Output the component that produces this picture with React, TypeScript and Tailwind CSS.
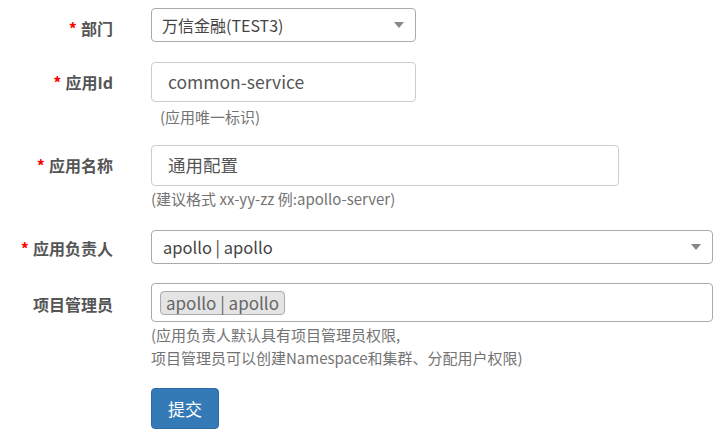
const font = { fontFamily: '"Noto Sans CJK SC", "Liberation Sans", sans-serif' };

function Label({ text, required, pt }: { text: string; required?: boolean; pt: string }) {
  return (
    <div className={`w-[113px] shrink-0 text-right text-[16px] font-bold text-[#555] leading-[20px] ${pt}`}>
      {required && <span className="text-[#ff0000] mr-1">*</span>}
      {text}
    </div>
  );
}

function Caret() {
  return (
    <span className="absolute right-[11px] top-1/2 -translate-y-1/2 w-0 h-0 border-l-[5px] border-r-[5px] border-t-[6px] border-l-transparent border-r-transparent border-t-[#888]" />
  );
}

export default function App() {
  return (
    <div className="w-[723px] h-[435px] bg-white text-[#333] overflow-hidden" style={font}>
      <div className="pt-[8px]">
        {/* 部门 */}
        <div className="flex items-start">
          <Label text="部门" required pt="pt-[10px]" />
          <div className="ml-[38px]">
            <div className="relative w-[265px] h-[34px] border border-[#aaa] rounded-[4px] flex items-center pl-[10px] text-[16px] text-[#444]">
              万信金融(TEST3)
              <Caret />
            </div>
          </div>
        </div>

        {/* 应用Id */}
        <div className="flex items-start mt-[20px]">
          <Label text="应用Id" required pt="pt-[10px]" />
          <div className="ml-[38px]">
            <div className="w-[265px] h-[40px] border border-[#ccc] rounded-[4px] flex items-center pl-[16px] text-[17.5px] text-[#555]">
              common-service
            </div>
            <div className="pl-[9px] mt-[4px] text-[15px] leading-[21px] text-[#737373]">(应用唯一标识)</div>
          </div>
        </div>

        {/* 应用名称 */}
        <div className="flex items-start mt-[18px]">
          <Label text="应用名称" required pt="pt-[10px]" />
          <div className="ml-[38px]">
            <div className="w-[468px] h-[41px] border border-[#ccc] rounded-[4px] flex items-center pl-[16px] text-[17.5px] text-[#555]">
              通用配置
            </div>
            <div className="mt-[2px] text-[15px] leading-[21px] text-[#737373]">(建议格式 xx-yy-zz 例:apollo-server)</div>
          </div>
        </div>

        {/* 应用负责人 */}
        <div className="flex items-start mt-[21px]">
          <Label text="应用负责人" required pt="pt-[8px]" />
          <div className="ml-[38px]">
            <div className="relative w-[562px] h-[34px] border border-[#aaa] rounded-[4px] flex items-center pl-[11px] text-[16.5px] text-[#444]">
              apollo | apollo
              <Caret />
            </div>
          </div>
        </div>

        {/* 项目管理员 */}
        <div className="flex items-start mt-[19px]">
          <Label text="项目管理员" pt="pt-[11px]" />
          <div className="ml-[38px]">
            <div className="w-[562px] h-[39px] border border-[#aaa] rounded-[4px] flex items-center pl-[8px]">
              <span className="h-[24px] px-[5px] flex items-center bg-[#e4e4e4] border border-[#aaa] rounded-[4px] text-[17px] text-[#666]">
                apollo | apollo
              </span>
            </div>
            <div className="mt-[1px] text-[15px] leading-[23px] text-[#737373]">
              (应用负责人默认具有项目管理员权限,
              <br />
              项目管理员可以创建Namespace和集群、分配用户权限)
            </div>
          </div>
        </div>

        {/* 提交 */}
        <div className="flex mt-[19px]">
          <div className="w-[113px] shrink-0" />
          <div className="ml-[38px]">
            <button className="w-[68px] h-[41px] bg-[#337ab7] border border-[#2e6da4] rounded-[4px] text-white text-[17px]">
              提交
            </button>
          </div>
        </div>
      </div>
    </div>
  );
}
